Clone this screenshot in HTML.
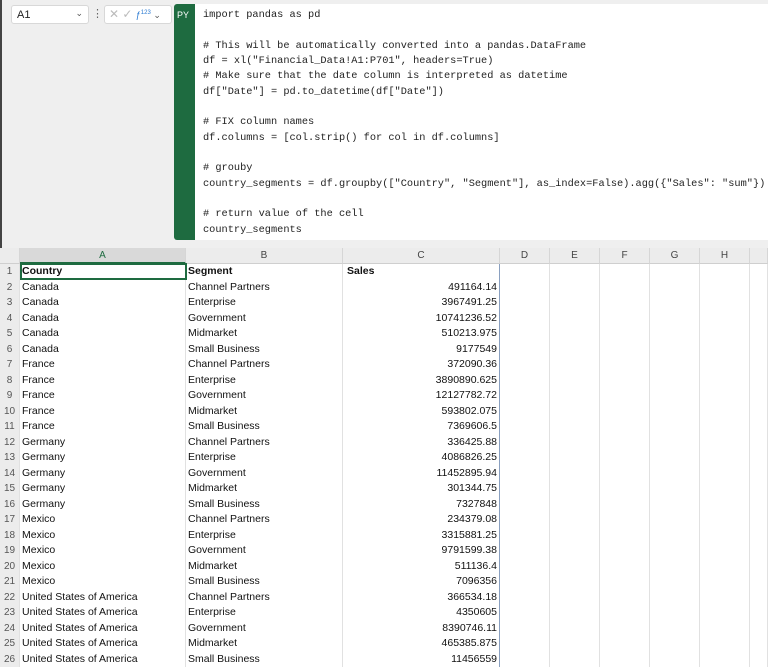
<!DOCTYPE html>
<html><head><meta charset="utf-8"><style>
*{margin:0;padding:0;box-sizing:border-box}
body{width:768px;height:667px;overflow:hidden;background:#fff;font-family:"Liberation Sans",sans-serif;position:relative}
.top{position:absolute;left:0;top:0;width:768px;height:248px;background:#efefef;border-left:2px solid #444}
.nb{position:absolute;left:9px;top:5px;width:78px;height:19px;background:#fff;border:1px solid #d8d8d8;border-radius:3px;font-size:11px;padding:3px 0 0 5px;color:#222}
.fb{position:absolute;left:102px;top:5px;width:68px;height:19px;background:#fff;border:1px solid #d8d8d8;border-radius:3px;color:#bbb;font-size:12px;padding:1px 4px}
.green{position:absolute;left:172px;top:4px;width:21px;height:236px;background:#1e6b40;color:#fff;font-size:9px;padding:6px 0 0 3px;border-radius:3px 0 0 3px}
.code{position:absolute;left:193px;top:4px;width:575px;height:236px;background:#fff;font-family:"Liberation Mono",monospace;font-size:10.3px;line-height:15.35px;white-space:pre;color:#222;padding:4px 0 0 8px;overflow:hidden}
.hdr{position:absolute;top:248px;height:16px;background:#ececec;border-right:1px solid #d6d6d6;border-bottom:1px solid #cfcfcf;font-size:10px;color:#444;text-align:center;line-height:16px}
.grid{position:absolute;left:0;top:264px}
.r{height:15.5px;position:relative;border-bottom:1px solid #e1e1e1;font-size:10.5px;line-height:15px;color:#111;white-space:nowrap}
.r span{position:absolute;top:0;height:15.5px;border-right:1px solid #e1e1e1;overflow:hidden}
.rn{left:0;width:20px;background:#ececec;text-align:center;color:#555;font-size:10px}
.a{left:20px;width:166px;padding-left:2px}
.b{left:186px;width:157px;padding-left:2px}
.c{left:343px;width:157px;padding-right:2px;padding-left:4px;border-right:1px solid #8aa0c0!important}
.d{left:500px;width:50px}.e{left:550px;width:50px}.f{left:600px;width:50px}.g{left:650px;width:50px}.h{left:700px;width:50px}.i{left:750px;width:18px}
</style></head><body>
<div class="top">
<div class="nb">A1<span style="position:absolute;right:5px;top:2px;color:#555;font-size:9px">&#8964;</span></div>
<div style="position:absolute;left:90px;top:7px;color:#666;font-size:11px">&#8942;</div>
<div class="fb">✕ ✓ <span style="color:#2a7ad2;font-size:9px">ƒ<sup style="font-size:6px">123</sup></span><span style="color:#555;font-size:9px"> &#8964;</span></div>
<div class="green">PY</div>
<div class="code">import pandas as pd

# This will be automatically converted into a pandas.DataFrame
df = xl("Financial_Data!A1:P701", headers=True)
# Make sure that the date column is interpreted as datetime
df["Date"] = pd.to_datetime(df["Date"])

# FIX column names
df.columns = [col.strip() for col in df.columns]

# grouby
country_segments = df.groupby(["Country", "Segment"], as_index=False).agg({"Sales": "sum"})

# return value of the cell
country_segments</div>
</div>
<div class="hdr" style="left:0;width:20px"></div>
<div class="hdr" style="left:20px;width:166px;background:#d9d9d9;color:#1e6b40;border-bottom:2px solid #1e6b40">A</div>
<div class="hdr" style="left:186px;width:157px">B</div>
<div class="hdr" style="left:343px;width:157px">C</div>
<div class="hdr" style="left:500px;width:50px">D</div>
<div class="hdr" style="left:550px;width:50px">E</div>
<div class="hdr" style="left:600px;width:50px">F</div>
<div class="hdr" style="left:650px;width:50px">G</div>
<div class="hdr" style="left:700px;width:50px">H</div>
<div class="hdr" style="left:750px;width:18px"></div>
<div class="grid" id="g"></div>
<div style="position:absolute;left:20px;top:263px;width:167px;height:17px;border:2px solid #1e6b40"></div>
<script>
var d=[["Country","Segment","Sales"],["Canada","Channel Partners","491164.14"],["Canada","Enterprise","3967491.25"],["Canada","Government","10741236.52"],["Canada","Midmarket","510213.975"],["Canada","Small Business","9177549"],["France","Channel Partners","372090.36"],["France","Enterprise","3890890.625"],["France","Government","12127782.72"],["France","Midmarket","593802.075"],["France","Small Business","7369606.5"],["Germany","Channel Partners","336425.88"],["Germany","Enterprise","4086826.25"],["Germany","Government","11452895.94"],["Germany","Midmarket","301344.75"],["Germany","Small Business","7327848"],["Mexico","Channel Partners","234379.08"],["Mexico","Enterprise","3315881.25"],["Mexico","Government","9791599.38"],["Mexico","Midmarket","511136.4"],["Mexico","Small Business","7096356"],["United States of America","Channel Partners","366534.18"],["United States of America","Enterprise","4350605"],["United States of America","Government","8390746.11"],["United States of America","Midmarket","465385.875"],["United States of America","Small Business","11456559"]];
var h="";d.forEach(function(r,i){var bold=i==0?"font-weight:bold;":"";h+='<div class="r" style="'+bold+'"><span class="rn" style="font-weight:normal">'+(i+1)+'</span><span class="a">'+r[0]+'</span><span class="b">'+r[1]+'</span><span class="c" style="text-align:'+(i==0?'left':'right')+'">'+r[2]+'</span><span class="d"></span><span class="e"></span><span class="f"></span><span class="g"></span><span class="h"></span><span class="i"></span></div>'});
document.getElementById("g").innerHTML=h;
</script>
</body></html>
